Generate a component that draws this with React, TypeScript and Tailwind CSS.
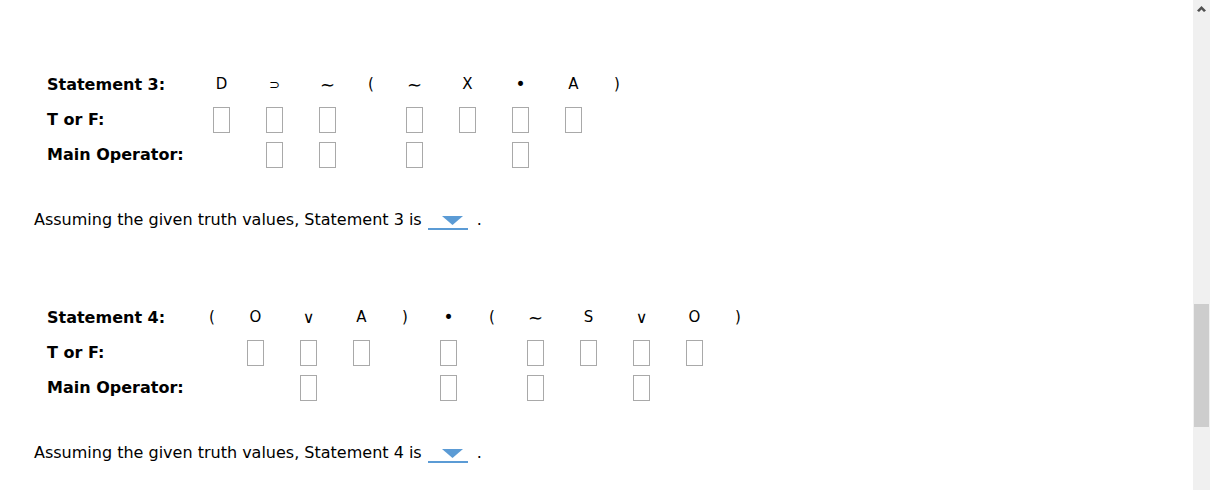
import React from "react";

type Cell = { sym: string; tf?: boolean; main?: boolean; paren?: boolean };

const s3: Cell[] = [
  { sym: "D", tf: true },
  { sym: "⊃", tf: true, main: true },
  { sym: "~", tf: true, main: true },
  { sym: "(", paren: true },
  { sym: "~", tf: true, main: true },
  { sym: "X", tf: true },
  { sym: "•", tf: true, main: true },
  { sym: "A", tf: true },
  { sym: ")", paren: true },
];

const s4: Cell[] = [
  { sym: "(", paren: true },
  { sym: "O", tf: true },
  { sym: "v", tf: true, main: true },
  { sym: "A", tf: true },
  { sym: ")", paren: true },
  { sym: "•", tf: true, main: true },
  { sym: "(", paren: true },
  { sym: "~", tf: true, main: true },
  { sym: "S", tf: true },
  { sym: "v", tf: true, main: true },
  { sym: "O", tf: true },
  { sym: ")", paren: true },
];

function Box() {
  return <div className="w-[17px] h-[26px] border border-[#a9a9a9] bg-white" />;
}

function Symbol({ sym }: { sym: string }) {
  if (sym === "~") return <span className="text-[18px] leading-none">∼</span>;
  if (sym === "v") return <span className="text-[16px]">∨</span>;
  if (sym === "⊃") return <span className="text-[13px]">⊃</span>;
  if (sym === "•") return <span className="text-[17px]">•</span>;
  return <span className="text-[15px]">{sym}</span>;
}

function Statement({ n, cells }: { n: number; cells: Cell[] }) {
  const colW = (c: Cell) => (c.paren ? "w-[34px]" : "w-[53px]");
  return (
    <div className="ml-[13px] flex flex-col">
      <div className="flex h-[35px] items-center">
        <div className="w-[148px] font-bold">Statement {n}:</div>
        {cells.map((c, i) => (
          <div key={i} className={`${colW(c)} flex justify-center`}>
            <Symbol sym={c.sym} />
          </div>
        ))}
      </div>
      <div className="flex h-[35px] items-center">
        <div className="w-[148px] font-bold">T or F:</div>
        {cells.map((c, i) => (
          <div key={i} className={`${colW(c)} flex justify-center`}>
            {c.tf ? <Box /> : null}
          </div>
        ))}
      </div>
      <div className="flex h-[35px] items-center">
        <div className="w-[148px] font-bold">Main Operator:</div>
        {cells.map((c, i) => (
          <div key={i} className={`${colW(c)} flex justify-center`}>
            {c.main ? <Box /> : null}
          </div>
        ))}
      </div>
    </div>
  );
}

function Answer({ n }: { n: number }) {
  return (
    <div className="flex h-[20px] items-center">
      <span>Assuming the given truth values, Statement {n} is</span>
      <span className="relative ml-[6px] inline-flex h-[20px] w-[40px] items-center justify-center border-b-2 border-[#5b9bd5]">
        <svg width="21" height="9" viewBox="0 0 21 9" className="mt-[2px] ml-[10px]">
          <polygon points="0,0 21,0 10.5,9" fill="#5b9bd5" />
        </svg>
      </span>
      <span className="ml-[9px]">.</span>
    </div>
  );
}

export default function App() {
  return (
    <div
      className="relative h-[490px] w-[1210px] overflow-hidden bg-white text-[16px] text-black"
      style={{ fontFamily: '"DejaVu Sans", Verdana, sans-serif' }}
    >
      <div className="flex flex-col pl-[34px] pt-[67px]">
        <Statement n={3} cells={s3} />
        <div className="mt-[38px]">
          <Answer n={3} />
        </div>
        <div className="mt-[70px]">
          <Statement n={4} cells={s4} />
        </div>
        <div className="mt-[38px]">
          <Answer n={4} />
        </div>
      </div>
      {/* scrollbar */}
      <div className="absolute right-0 top-0 flex h-full w-[17px] flex-col items-center bg-[#f0f0f0]">
        <svg width="9" height="6" viewBox="0 0 9 6" className="mt-[6px]">
          <polygon points="4.5,0 9,4.5 7,6 4.5,3.5 2,6 0,4.5" fill="#505050" />
        </svg>
        <div className="absolute left-[1px] top-[304px] h-[123px] w-[15px] bg-[#cdcdcd]" />
      </div>
    </div>
  );
}
